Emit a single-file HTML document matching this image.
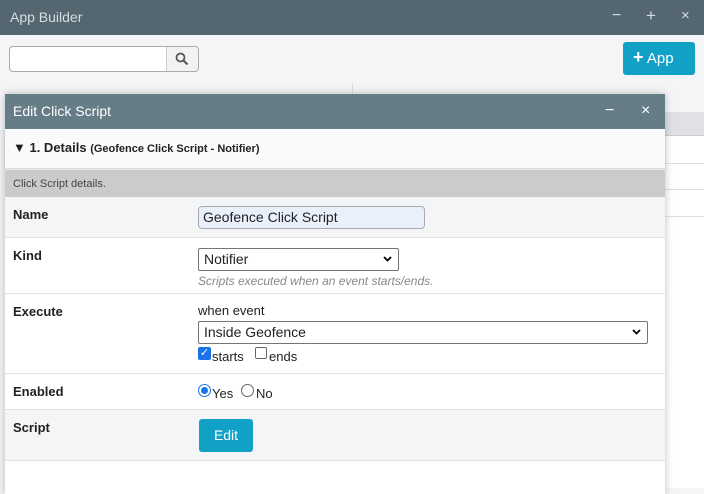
<!DOCTYPE html>
<html><head><style>
*{box-sizing:border-box;margin:0;padding:0}
body{width:704px;height:488px;overflow:hidden;background:#f4f5f7;font-family:"Liberation Sans",sans-serif;position:relative;font-size:13px;color:#222}
.top{position:absolute;left:0;top:0;width:704px;height:35px;background:#546670;color:#d5dde1;font-size:14px}
.top .t{position:absolute;left:10px;top:9px}
.abs{position:absolute}
.dlg{position:absolute;left:5px;top:94px;width:660px;height:400px;background:#fff;box-shadow:0 0 8px rgba(0,0,0,.25)}
.dh{height:35px;background:#667d88;color:#fff;font-size:14px;position:relative}
.row{position:absolute;left:0;width:660px;border-bottom:1px solid #e2e2e2}
.lab{position:absolute;left:8px;top:10px;font-weight:bold;font-size:13px}
.sel{position:absolute;border:1px solid #767676;border-radius:2px;background:#fff;font-size:14px;padding:2px 5px}
.chev{position:absolute;right:6px;top:7px}
</style></head><body>
<div class="top"><span class="t">App Builder</span>
<span class="abs" style="left:612px;top:7px;font-size:16px">−</span>
<span class="abs" style="left:646px;top:6px;font-size:17px">+</span>
<span class="abs" style="left:681px;top:7px;font-size:15px">×</span></div>
<div class="abs" style="left:9px;top:46px;width:190px;height:26px;border:1px solid #aaa;border-radius:4px;background:#fff"></div>
<div class="abs" style="left:166px;top:47px;width:32px;height:24px;border-left:1px solid #ccc;background:#f2f2f2;border-radius:0 4px 4px 0"></div>
<svg class="abs" style="left:175px;top:52px" width="14" height="14"><circle cx="5.5" cy="5.5" r="4" fill="none" stroke="#555" stroke-width="1.8"/><line x1="8.5" y1="8.5" x2="12.5" y2="12.5" stroke="#555" stroke-width="2"/></svg>
<div class="abs" style="left:623px;top:42px;width:72px;height:33px;background:#11a1c7;border-radius:3px;color:#fff;font-size:15px;padding:8px 0 0 10px"><b style="font-size:18px;line-height:14px">+</b> App</div>
<div class="abs" style="left:352px;top:84px;width:1px;height:12px;background:#ddd"></div>
<div class="abs" style="left:665px;top:112px;width:39px;height:24px;background:#dfe1e6;border-bottom:1px solid #ccc"></div>
<div class="abs" style="left:665px;top:136px;width:39px;height:352px;background:#fff"></div>
<div class="abs" style="left:665px;top:163px;width:39px;height:1px;background:#e0e0e0"></div>
<div class="abs" style="left:665px;top:189px;width:39px;height:1px;background:#e0e0e0"></div>
<div class="abs" style="left:665px;top:216px;width:39px;height:1px;background:#e0e0e0"></div>
<div class="dlg">
<div class="dh"><span class="abs" style="left:8px;top:9px">Edit Click Script</span>
<span class="abs" style="left:600px;top:8px;font-size:16px">−</span><span class="abs" style="left:636px;top:8px;font-size:16px">×</span></div>
<div class="abs" style="left:0;top:35px;width:660px;height:40px;background:#fafafa;border-bottom:1px solid #ddd;box-shadow:0 1px 2px rgba(0,0,0,.15)"><span class="abs" style="left:8px;top:11px;font-size:13px;font-weight:bold">▼ 1. Details <span style="font-size:11px">(Geofence Click Script - Notifier)</span></span></div>
<div class="abs" style="left:0;top:76px;width:660px;height:27px;background:#cbcbcb;font-size:11px;color:#444;padding:8px 0 0 8px">Click Script details.</div>
<div class="row" style="top:103px;height:41px;background:#f4f5f7"><span class="lab">Name</span>
<div class="abs" style="left:193px;top:9px;width:227px;height:23px;border:1px solid #aaa;border-radius:4px;background:#e9f0fb;font-size:14px;padding:2px 4px">Geofence Click Script</div></div>
<div class="row" style="top:144px;height:56px"><span class="lab">Kind</span>
<div class="sel" style="left:193px;top:10px;width:201px;height:23px">Notifier<svg class="chev" width="9" height="6"><path d="M1 1l3.5 3.5L8 1" fill="none" stroke="#000" stroke-width="1.8"/></svg></div>
<span class="abs" style="left:193px;top:36px;font-size:12px;font-style:italic;color:#888">Scripts executed when an event starts/ends.</span></div>
<div class="row" style="top:200px;height:80px"><span class="lab">Execute</span>
<span class="abs" style="left:193px;top:9px;font-size:13px">when event</span>
<div class="sel" style="left:193px;top:27px;width:450px;height:23px">Inside Geofence<svg class="chev" width="9" height="6"><path d="M1 1l3.5 3.5L8 1" fill="none" stroke="#000" stroke-width="1.8"/></svg></div>
<div class="abs" style="left:193px;top:53px;width:13px;height:13px;background:#1a73e8;border-radius:2px;color:#fff;font-size:11px;line-height:13px;text-align:center">✓</div>
<span class="abs" style="left:207px;top:55px">starts</span>
<div class="abs" style="left:250px;top:53px;width:12px;height:12px;border:1px solid #666;border-radius:2px"></div>
<span class="abs" style="left:264px;top:55px">ends</span></div>
<div class="row" style="top:280px;height:36px"><span class="lab">Enabled</span>
<div class="abs" style="left:193px;top:10px;width:13px;height:13px;border:1px solid #1a73e8;border-radius:50%"><div style="margin:2px;width:7px;height:7px;border-radius:50%;background:#1a73e8"></div></div>
<span class="abs" style="left:207px;top:12px">Yes</span>
<div class="abs" style="left:236px;top:10px;width:13px;height:13px;border:1px solid #666;border-radius:50%"></div>
<span class="abs" style="left:251px;top:12px">No</span></div>
<div class="row" style="top:316px;height:51px;background:#f4f5f7"><span class="lab">Script</span>
<div class="abs" style="left:194px;top:9px;width:54px;height:33px;background:#11a1c7;border-radius:3px;color:#fff;font-size:14px;text-align:center;line-height:33px">Edit</div></div>
</div>
</body></html>
